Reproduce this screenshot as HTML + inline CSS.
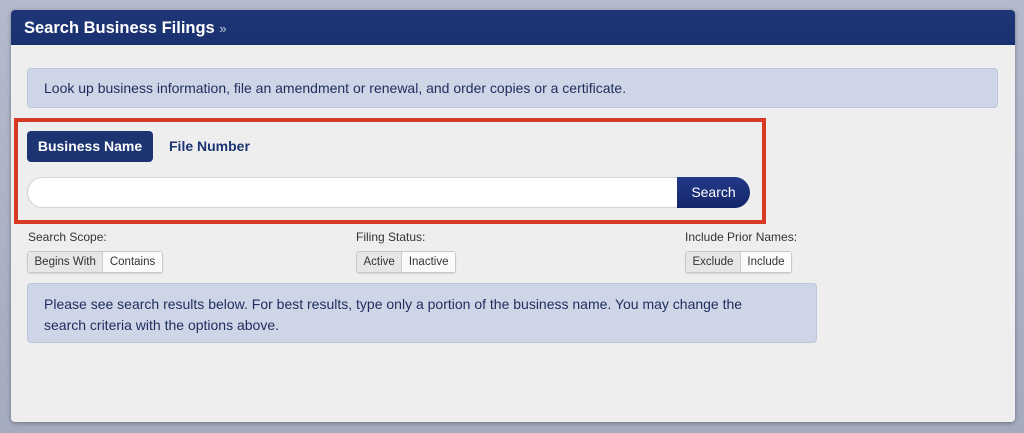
<!DOCTYPE html>
<html><head><meta charset="utf-8"><style>
*{box-sizing:border-box;margin:0;padding:0}
body{width:1024px;height:433px;overflow:hidden;background:linear-gradient(#b4bacb,#a4abbf);font-family:"Liberation Sans",sans-serif;position:relative}
.panel{position:absolute;left:11px;top:10px;width:1004px;height:412px;background:#eeeeee;border-radius:4px;box-shadow:0 1px 4px rgba(0,0,0,.35);overflow:hidden}
.hdr{height:35px;background:linear-gradient(#1f3677,#1a3170);color:#fff;font-weight:bold;font-size:16.5px;padding:9px 0 0 13px}
.hdr span{font-size:13px;color:#c8d0e4;font-weight:normal}
.info{position:absolute;background:#cdd5e6;border:1px solid #bcc7de;border-radius:4px;color:#1e2d5e;font-size:14px}
.red{position:absolute;left:14px;top:118px;width:752px;height:106px;border:4px solid #d63a24}
.bn{position:absolute;left:27px;top:131px;width:126px;height:31px;background:#1c3472;border-radius:4px;color:#fff;font-weight:bold;font-size:14px;text-align:center;line-height:31px}
.fn{position:absolute;left:169px;top:131px;line-height:31px;color:#1c3472;font-weight:bold;font-size:14px}
.inp{position:absolute;left:27px;top:177px;width:651px;height:31px;background:#fff;border:1px solid #d4d4d4;border-radius:16px 0 0 16px}
.sb{position:absolute;left:677px;top:177px;width:73px;height:31px;background:linear-gradient(#233a8a,#152569);border-radius:0 16px 16px 0;color:#fff;font-size:14px;text-align:center;line-height:31px}
.lbl{position:absolute;top:230px;font-size:12px;color:#333}
.grp{position:absolute;top:251px;height:22px;display:flex;border:1px solid #c8c8c8;border-radius:3px;font-size:11.5px;color:#333;box-shadow:0 1px 1px rgba(0,0,0,.1)}
.grp div{padding:0 6.5px;line-height:20px;background:#fafafa}
.grp div:first-child{background:#e6e6e6;border-right:1px solid #ccc}
</style></head><body>
<div class="panel"><div class="hdr">Search Business Filings <span>»</span></div></div>
<div class="info" style="left:27px;top:68px;width:971px;height:40px;padding:11px 0 0 16px">Look up business information, file an amendment or renewal, and order copies or a certificate.</div>
<div class="red"></div>
<div class="bn">Business Name</div>
<div class="fn">File Number</div>
<div class="inp"></div>
<div class="sb">Search</div>
<div class="lbl" style="left:28px">Search Scope:</div>
<div class="lbl" style="left:356px">Filing Status:</div>
<div class="lbl" style="left:685px">Include Prior Names:</div>
<div class="grp" style="left:27px"><div>Begins With</div><div>Contains</div></div>
<div class="grp" style="left:356px"><div>Active</div><div>Inactive</div></div>
<div class="grp" style="left:685px"><div>Exclude</div><div>Include</div></div>
<div class="info" style="left:27px;top:283px;width:790px;height:60px;padding:10px 0 0 16px;line-height:21px">Please see search results below. For best results, type only a portion of the business name. You may change the<br>search criteria with the options above.</div>
</body></html>
